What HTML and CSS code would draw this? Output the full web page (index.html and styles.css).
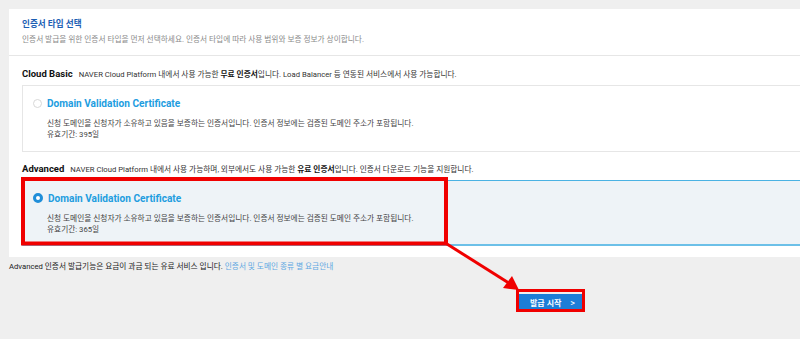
FILE: index.html
```html
<!DOCTYPE html>
<html lang="ko">
<head>
    <meta charset="UTF-8">
    <meta name="viewport" content="width=device-width, initial-scale=1.0">
    <title>인증서 타입 선택</title>
    <link rel="stylesheet" href="styles.css">
</head>
<body>
    <div class="panel">
        <div class="panel-head">
            <h2 class="panel-title">인증서 타입 선택</h2>
            <p class="panel-sub">인증서 발급을 위한 인증서 타입을 먼저 선택하세요. 인증서 타입에 따라 사용 범위와 보증 정보가 상이합니다.</p>
        </div>

        <div class="panel-body">
            <div class="group-label">
                <strong>Cloud Basic</strong>
                <span>NAVER Cloud Platform 내에서 사용 가능한 <b>무료 인증서</b>입니다. Load Balancer 등 연동된 서비스에서 사용 가능합니다.</span>
            </div>
            <div class="cert">
                <div class="cert-head">
                    <span class="radio"></span>
                    <span class="cert-name">Domain Validation Certificate</span>
                </div>
                <p class="cert-desc">신청 도메인을 신청자가 소유하고 있음을 보증하는 인증서입니다. 인증서 정보에는 검증된 도메인 주소가 포함됩니다.</p>
                <p class="cert-desc">유효기간: 395일</p>
            </div>

            <div class="group-label">
                <strong>Advanced</strong>
                <span>NAVER Cloud Platform 내에서 사용 가능하며, 외부에서도 사용 가능한 <b>유료 인증서</b>입니다. 인증서 다운로드 기능을 지원합니다.</span>
            </div>
            <div class="cert selected">
                <div class="cert-head">
                    <span class="radio"></span>
                    <span class="cert-name">Domain Validation Certificate</span>
                </div>
                <p class="cert-desc">신청 도메인을 신청자가 소유하고 있음을 보증하는 인증서입니다. 인증서 정보에는 검증된 도메인 주소가 포함됩니다.</p>
                <p class="cert-desc">유효기간: 365일</p>
            </div>
        </div>
    </div>

    <p class="notice">Advanced 인증서 발급기능은 요금이 과금 되는 유료 서비스 입니다. <a href="#price">인증서 및 도메인 종류 별 요금안내</a></p>

    <div class="actions">
        <button class="btn-start">발급 시작 <span class="chev">&gt;</span></button>
    </div>

    <!-- red annotation marks drawn over the page -->
    <svg class="marks" width="800" height="339" viewBox="0 0 800 339">
        <rect x="23" y="179" width="423" height="64.5" fill="none" stroke="#f00000" stroke-width="4"/>
        <line x1="447" y1="244" x2="515" y2="287" stroke="#f00000" stroke-width="3"/>
        <polygon points="519,290 503,288 512,276" fill="#f00000"/>
        <rect x="517.5" y="290.5" width="66" height="20" fill="none" stroke="#f00000" stroke-width="3"/>
    </svg>
</body>
</html>
```

FILE: styles.css
```css
body {
    margin: 0;
    padding: 9px 0 0 9px;
    background: #efefef;
    font-family: Roboto, "Noto Sans CJK KR", sans-serif;
    font-size: 7.7px;
    color: #333;
    overflow: hidden;
    height: 330px;
    position: relative;
}

.panel {
    background: #ffffff;
    width: 830px;
    padding-bottom: 11px;
}

.panel-head {
    padding: 9px 13px 9px;
    border-bottom: 1px solid #e6e6e6;
}

.panel-title {
    margin: 0;
    font-size: 8.6px;
    line-height: 12px;
    font-weight: bold;
    color: #1b5eb3;
}

.panel-sub {
    margin: 4px 0 0;
    line-height: 12px;
    color: #8a8a8a;
}

.panel-body {
    padding: 0 0 0 13px;
}

.group-label {
    margin-top: 12px;
    line-height: 12px;
    display: flex;
    align-items: baseline;
    gap: 6px;
    color: #333;
}

.group-label + .cert {
    margin-top: 4px;
}

.group-label strong {
    font-size: 9.5px;
    color: #111;
}

.group-label b {
    color: #111;
}

.cert + .group-label {
    margin-top: 11px;
}

.cert {
    border: 1px solid #e6e6e6;
    border-right: none;
    padding: 10px 0 11px 10px;
    height: 44px;
}

.cert-head {
    display: flex;
    align-items: center;
    gap: 5px;
    height: 14px;
}

.radio {
    width: 9px;
    height: 9px;
    box-sizing: border-box;
    border: 1px solid #d8d8d8;
    border-radius: 50%;
    background: #fff;
}

.cert-name {
    font-size: 10.1px;
    font-weight: bold;
    color: #229ddf;
}

.cert-desc {
    margin: 0;
    padding-left: 14px;
    line-height: 11px;
    color: #444;
}

.cert-head + .cert-desc {
    margin-top: 8px;
}

.cert.selected {
    background: #eef3f7;
    border-top: 1px solid #4bb2e3;
    border-bottom: 2px solid #6cc0e8;
    height: 42px;
}

.cert.selected .radio {
    border: 3px solid #1f8ed9;
    width: 10px;
    height: 10px;
}

.notice {
    margin: 4px 0 0;
    line-height: 12px;
    color: #222;
}

.notice a {
    color: #5ea8e2;
    text-decoration: none;
}

.actions {
    padding: 21px 0 0 510px;
}

.btn-start {
    width: 63px;
    height: 17px;
    border: none;
    background: #1c7dd7;
    color: #fff;
    font-family: Roboto, "Noto Sans CJK KR", sans-serif;
    font-size: 8px;
    font-weight: bold;
    padding: 0 0 0 4px;
    display: flex;
    align-items: center;
    justify-content: center;
    gap: 9px;
}

.chev {
    font-weight: normal;
    font-size: 9px;
}

.marks {
    position: absolute;
    top: 0;
    left: 0;
    pointer-events: none;
}
```
